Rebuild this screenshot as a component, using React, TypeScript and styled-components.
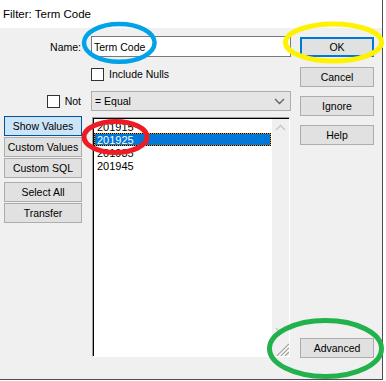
import React from "react";
import styled, { createGlobalStyle } from "styled-components";

const Global = createGlobalStyle`
  html, body { margin: 0; padding: 0; background: #fff; }
  body {
    width: 386px; height: 381px; overflow: hidden;
    font-family: "Liberation Sans", Arial, sans-serif;
    color: #000;
  }
`;

const Screen = styled.div`
  position: relative;
  width: 386px;
  height: 381px;
  display: flex;
  background: #fff;
`;

const Dialog = styled.div`
  width: 382px;
  height: 379px;
  border-right: 1px solid #4d4d4d;
  border-bottom: 1px solid #4d4d4d;
  display: flex;
  flex-direction: column;
  background: #f0f0f0;
`;

const TitleBar = styled.div`
  height: 28px;
  flex: none;
  background: #fff;
  display: flex;
  align-items: center;
  padding-left: 3px;
  font-size: 11.5px;
`;

const Body = styled.div`
  flex: 1;
  display: grid;
  grid-template-columns: 78px 200px 74px;
  grid-template-rows: 21px 8px 18px 8px 20px 5px 1fr;
  column-gap: 9px;
  padding: 8px 8px 22px 4px;
  font-size: 10.5px;
`;

const Label = styled.div<{ $row: number }>`
  grid-column: 1;
  grid-row: ${(p) => p.$row};
  display: flex;
  align-items: center;
  justify-content: flex-end;
  gap: 4px;
  padding-right: 1px;
`;

const TextField = styled.div`
  grid-column: 2;
  grid-row: 1;
  background: #fff;
  border: 1px solid #7a7a7a;
  display: flex;
  align-items: center;
  padding-left: 2px;
`;

const CheckRow = styled.label<{ $row: number; $col: number }>`
  grid-column: ${(p) => p.$col};
  grid-row: ${(p) => p.$row};
  display: flex;
  align-items: center;
  gap: 5px;
  justify-content: ${(p) => (p.$col === 1 ? "flex-end" : "flex-start")};
  padding-right: ${(p) => (p.$col === 1 ? "1px" : "0")};
`;

const Box = styled.span`
  width: 11px;
  height: 11px;
  border: 1px solid #333;
  background: #fff;
  flex: none;
`;

const Select = styled.div`
  grid-column: 2;
  grid-row: 5;
  background: #e5e5e5;
  border: 1px solid #adadad;
  display: flex;
  align-items: center;
  justify-content: space-between;
  padding: 0 5px 0 3px;
`;

const LeftButtons = styled.div`
  grid-column: 1;
  grid-row: 7;
  display: flex;
  flex-direction: column;
`;

const Btn = styled.div<{ $active?: boolean; $default?: boolean; $gap?: number }>`
  height: 20px;
  box-sizing: border-box;
  flex: none;
  display: flex;
  align-items: center;
  justify-content: center;
  margin-top: ${(p) => p.$gap ?? 0}px;
  background: ${(p) => (p.$active ? "#cce4f7" : "#e1e1e1")};
  border: 1px solid ${(p) => (p.$active ? "#005499" : p.$default ? "#0078d7" : "#adadad")};
  box-shadow: ${(p) => (p.$default ? "inset 0 0 0 1px #0078d7" : "none")};
  white-space: nowrap;
`;

const RightButtons = styled.div`
  grid-column: 3;
  grid-row: 1 / -1;
  display: flex;
  flex-direction: column;
  padding-top: 1px;
  margin-bottom: -1px;
`;

const Spring = styled.div`
  flex: 1;
`;

const ListBox = styled.div`
  grid-column: 2;
  grid-row: 7;
  margin: 1px 1px 0 1px;
  border-style: solid;
  border-width: 1px;
  border-color: #a0a0a0 #fff #fff #a0a0a0;
  box-shadow: inset 1px 1px 0 #000;
  background: #fff;
  display: flex;
  padding: 1px 0 0 1px;
  font-size: 11px;
`;

const Items = styled.div`
  flex: 1;
  display: flex;
  flex-direction: column;
  padding-top: 1px;
`;

const Item = styled.div<{ $selected?: boolean }>`
  height: 13px;
  box-sizing: border-box;
  display: flex;
  align-items: center;
  padding-left: 2px;
  margin-right: 1px;
  color: ${(p) => (p.$selected ? "#fff" : "#000")};
  border: 1px solid ${(p) => (p.$selected ? "#000" : "transparent")};
  border-style: ${(p) => (p.$selected ? "dotted" : "solid")};
  background: ${(p) =>
    p.$selected
      ? "linear-gradient(#0078d7, #0078d7) padding-box, #f29a1e border-box"
      : "transparent"};
`;

const ScrollBar = styled.div`
  width: 17px;
  flex: none;
  background: #f0f0f0;
  display: flex;
  flex-direction: column;
`;

const Arrow = styled.div`
  height: 17px;
  flex: none;
  display: flex;
  align-items: center;
  justify-content: center;
`;

const Grip = styled.div`
  height: 17px;
  flex: none;
  display: flex;
  align-items: flex-end;
  justify-content: flex-end;
`;

const Overlay = styled.svg`
  position: absolute;
  left: 0;
  top: 0;
  pointer-events: none;
`;

const Chevron = ({ up, color }: { up?: boolean; color: string }) => (
  <svg width="11" height="7" viewBox="0 0 11 7">
    <polyline
      points={up ? "1,6 5.5,1.5 10,6" : "1,1 5.5,5.5 10,1"}
      fill="none"
      stroke={color}
      strokeWidth="1.3"
    />
  </svg>
);

export default function App() {
  return (
    <>
      <Global />
      <Screen>
        <Dialog>
          <TitleBar>Filter: Term Code</TitleBar>
          <Body>
            <Label $row={1}>Name:</Label>
            <TextField>Term Code</TextField>
            <CheckRow $row={3} $col={2}>
              <Box />
              Include Nulls
            </CheckRow>
            <CheckRow $row={5} $col={1}>
              <Box />
              Not
            </CheckRow>
            <Select>
              <span>= Equal</span>
              <Chevron color="#606060" />
            </Select>
            <LeftButtons>
              <Btn $active>Show Values</Btn>
              <Btn $gap={1}>Custom Values</Btn>
              <Btn $gap={1}>Custom SQL</Btn>
              <Btn $gap={4}>Select All</Btn>
              <Btn $gap={1}>Transfer</Btn>
            </LeftButtons>
            <ListBox>
              <Items>
                <Item>201915</Item>
                <Item $selected>201925</Item>
                <Item>201935</Item>
                <Item>201945</Item>
              </Items>
              <ScrollBar>
                <Arrow>
                  <Chevron up color="#c4c4c4" />
                </Arrow>
                <Spring />
                <Arrow>
                  <Chevron color="#c4c4c4" />
                </Arrow>
                <Grip>
                  <svg width="15" height="15" viewBox="0 0 15 15">
                    <g stroke="#a0a0a0" strokeWidth="1.2">
                      <line x1="3" y1="15" x2="15" y2="3" />
                      <line x1="7" y1="15" x2="15" y2="7" />
                      <line x1="11" y1="15" x2="15" y2="11" />
                    </g>
                    <g stroke="#fff" strokeWidth="1">
                      <line x1="4.5" y1="15" x2="15" y2="4.5" />
                      <line x1="8.5" y1="15" x2="15" y2="8.5" />
                    </g>
                  </svg>
                </Grip>
              </ScrollBar>
            </ListBox>
            <RightButtons>
              <Btn $default>OK</Btn>
              <Btn $gap={10}>Cancel</Btn>
              <Btn $gap={9}>Ignore</Btn>
              <Btn $gap={9}>Help</Btn>
              <Spring />
              <Btn>Advanced</Btn>
            </RightButtons>
          </Body>
        </Dialog>
        <Overlay width="386" height="381" viewBox="0 0 386 381">
          <ellipse cx="119.3" cy="42.8" rx="35.3" ry="18.9" fill="none" stroke="#00a2e8" strokeWidth="4.5" />
          <ellipse cx="333.5" cy="42.5" rx="48" ry="18.5" fill="none" stroke="#fff200" strokeWidth="5" />
          <ellipse cx="115.5" cy="137" rx="31.5" ry="15.5" fill="none" stroke="#ed1c24" strokeWidth="5" />
          <ellipse cx="325.5" cy="348.5" rx="56" ry="28" fill="none" stroke="#22b14c" strokeWidth="5" />
        </Overlay>
      </Screen>
    </>
  );
}
